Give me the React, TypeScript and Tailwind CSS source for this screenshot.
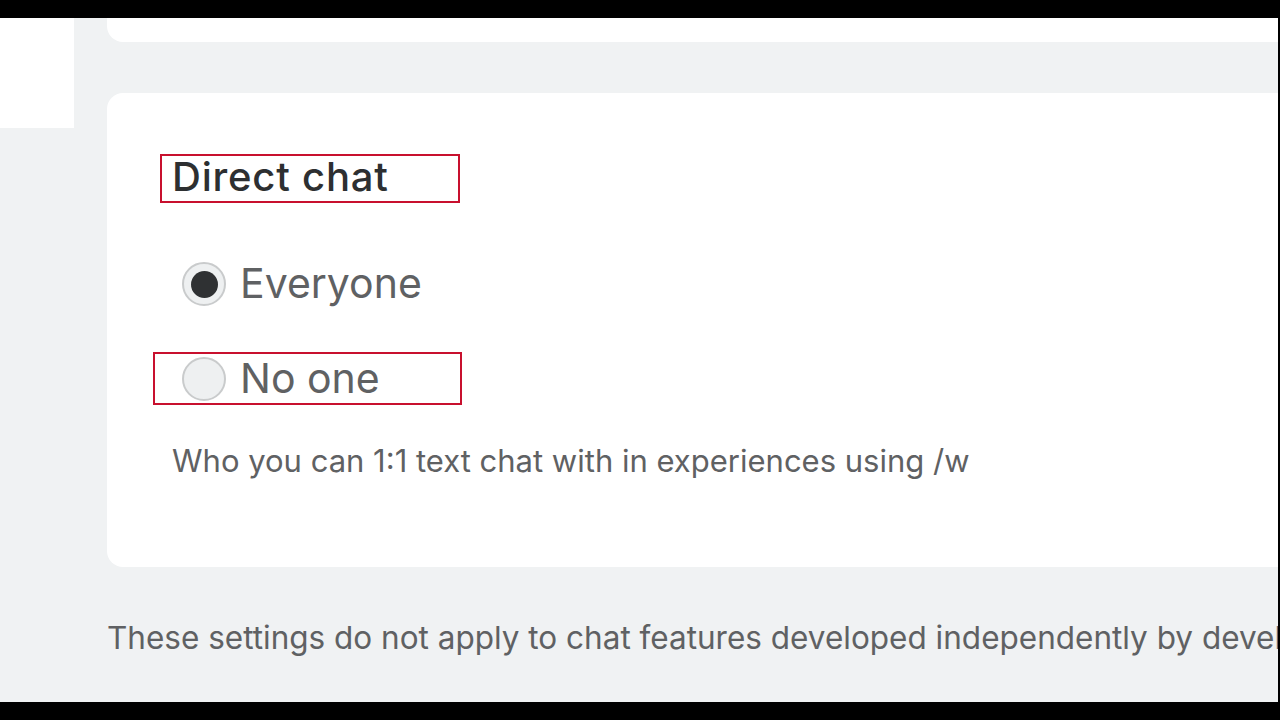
import React from 'react'

const font = { fontFamily: 'Inter, "Noto Sans", sans-serif' }

function Radio({ checked }: { checked: boolean }) {
  return (
    <span className="flex h-[44px] w-[44px] shrink-0 items-center justify-center rounded-full border-2 border-[#c9cbcc] bg-[#eef0f1]">
      {checked && <span className="h-[27px] w-[27px] rounded-full bg-[#2f3133]" />}
    </span>
  )
}

export default function App() {
  return (
    <div className="flex h-screen w-full flex-col bg-black" style={font}>
      <div className="h-[18px] shrink-0" />
      <div className="flex min-h-0 flex-1 pr-[2px]">
        <div className="flex flex-1 overflow-hidden bg-[#f0f2f3]">
          {/* sidebar stub */}
          <div className="w-[74px] shrink-0">
            <div className="h-[110px] bg-white" />
          </div>

          <main className="min-w-0 flex-1 pl-[33px]">
            <div className="h-[24px] rounded-bl-2xl bg-white" />

            <section className="mt-[51px] h-[474px] rounded-l-2xl bg-white pl-[53px] pt-[61px]">
              <div className="flex h-[49px] w-[300px] items-center border-2 border-[#c8102e] pb-[3px] pl-[10px] text-[40px] font-medium tracking-[0.02em] text-[#2d2f31]">
                Direct chat
              </div>

              <label className="ml-[22px] mt-[59px] flex h-[44px] items-center gap-[14px] text-[41px] text-[#5f6163]">
                <Radio checked />
                Everyone
              </label>

              <label className="-ml-[7px] mt-[46px] flex h-[53px] w-[309px] items-center gap-[14px] border-2 border-[#c8102e] pl-[27px] text-[41px] text-[#5f6163]">
                <Radio checked={false} />
                No one
              </label>

              <p className="ml-[12px] mt-[38px] text-[31px] leading-[36px] text-[#5f6163]">
                Who you can 1:1 text chat with in experiences using /w
              </p>
            </section>

            <p className="mt-[53px] whitespace-nowrap text-[31.5px] leading-[36px] text-[#5f6163]">
              These settings do not apply to chat features developed independently by developers
            </p>
          </main>
        </div>
      </div>
      <div className="h-[18px] shrink-0" />
    </div>
  )
}
